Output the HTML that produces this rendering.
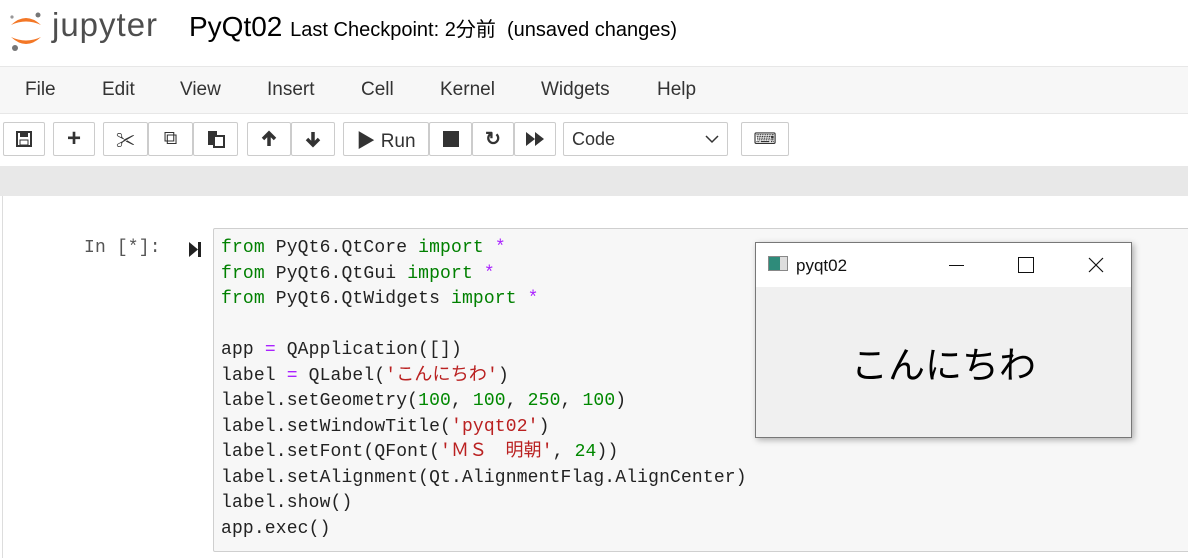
<!DOCTYPE html>
<html><head><meta charset="utf-8"><style>
body{margin:0;width:1188px;height:558px;overflow:hidden;background:#fff;font-family:"Liberation Sans","Noto Sans CJK JP",sans-serif;position:relative}
.abs{position:absolute}
.menu{left:0;top:66px;width:1188px;height:46px;background:#f7f7f7;border-top:1px solid #e7e7e7;border-bottom:1px solid #e7e7e7}
.menu span{position:absolute;top:12px;font-size:19px;color:#333}
.btn{position:absolute;top:122px;height:34px;border:1px solid #ccc;background:#fff;border-radius:2px;box-sizing:border-box;display:flex;align-items:center;justify-content:center;color:#333;font-size:19px}
.code{font-family:"Liberation Mono","Noto Sans CJK JP",monospace;font-size:18px;letter-spacing:0.15px;line-height:25.5px;white-space:pre;color:#222}
.k{color:#008000}.o{color:#aa22ff}.s{color:#ba2121}.n{color:#080}
</style></head><body>
<svg class="abs" style="left:6px;top:8px" width="40" height="44" viewBox="0 0 40 44">
<path d="M5 17 Q20 3 35 17 Q20 10 5 17Z" fill="#f37726"/>
<path d="M5 29 Q20 43 35 29 Q20 36 5 29Z" fill="#f37726"/>
<circle cx="32" cy="7" r="2.5" fill="#767677"/><circle cx="9" cy="40" r="3" fill="#767677"/><circle cx="6" cy="9" r="1.6" fill="#989798"/>
</svg>
<div class="abs" style="left:52px;top:6px;font-size:33px;color:#4e4e4e;letter-spacing:1px">jupyter</div>
<div class="abs" style="left:189px;top:11px;font-size:28px;color:#000">PyQt02 <span style="font-size:20px">Last Checkpoint: 2分前 &nbsp;(unsaved changes)</span></div>
<div class="abs menu">
<span style="left:25px">File</span><span style="left:102px">Edit</span><span style="left:180px">View</span><span style="left:267px">Insert</span><span style="left:361px">Cell</span><span style="left:440px">Kernel</span><span style="left:541px">Widgets</span><span style="left:657px">Help</span>
</div>
<div class="btn" style="left:3px;width:42px"><svg width="16" height="16"><rect x="1" y="1" width="14" height="14" fill="none" stroke="#333" stroke-width="2"/><rect x="4" y="1" width="8" height="5" fill="#333"/><rect x="4" y="9" width="8" height="5" fill="none" stroke="#333"/></svg></div>
<div class="btn" style="left:53px;width:42px;font-size:24px;font-weight:bold">+</div>
<div class="btn" style="left:103px;width:45px">✂</div>
<div class="btn" style="left:148px;width:45px">⧉</div>
<div class="btn" style="left:193px;width:45px"><svg width="18" height="18"><rect x="1" y="1" width="9" height="14" fill="#333"/><rect x="7" y="6" width="10" height="11" fill="#fff" stroke="#333" stroke-width="2"/></svg></div>
<div class="btn" style="left:247px;width:44px"><svg width="18" height="18"><path d="M9 16V3M3 9L9 3L15 9" stroke="#333" stroke-width="3.5" fill="none"/></svg></div>
<div class="btn" style="left:291px;width:44px"><svg width="18" height="18"><path d="M9 2V15M3 9L9 15L15 9" stroke="#333" stroke-width="3.5" fill="none"/></svg></div>
<div class="btn" style="left:343px;width:86px">▶&nbsp;Run</div>
<div class="btn" style="left:429px;width:43px"><div style="width:16px;height:16px;background:#333"></div></div>
<div class="btn" style="left:472px;width:42px;font-weight:bold">↻</div>
<div class="btn" style="left:514px;width:42px"><svg width="20" height="16"><path d="M1 1L10 8L1 15ZM10 1L19 8L10 15Z" fill="#333"/></svg></div>
<div class="btn" style="left:563px;width:165px;justify-content:flex-start;padding-left:8px;font-size:18px">Code<svg style="position:absolute;right:8px" width="14" height="10"><path d="M1 2L7 8L13 2" stroke="#333" stroke-width="1.5" fill="none"/></svg></div>
<div class="btn" style="left:741px;width:48px;font-size:16px">⌨</div>
<div class="abs" style="left:0;top:166px;width:1188px;height:30px;background:#e8e8e8"></div>
<div class="abs" style="left:2px;top:196px;width:1186px;height:362px;background:#fff;border-left:1px solid #ddd"></div>
<div class="abs code" style="left:84px;top:236px;color:#555">In [*]:</div>
<svg class="abs" style="left:188px;top:241px" width="14" height="17"><path d="M1 1 L10 8.5 L1 16Z" fill="#222"/><rect x="10" y="1" width="3" height="15" fill="#222"/></svg>
<div class="abs" style="left:213px;top:228px;width:980px;height:322px;background:#f7f7f7;border:1px solid #cfcfcf;border-radius:2px"></div>
<div class="abs code" style="left:221px;top:236px"><span class="k">from</span> PyQt6.QtCore <span class="k">import</span> <span class="o">*</span>
<span class="k">from</span> PyQt6.QtGui <span class="k">import</span> <span class="o">*</span>
<span class="k">from</span> PyQt6.QtWidgets <span class="k">import</span> <span class="o">*</span>

app <span class="o">=</span> QApplication([])
label <span class="o">=</span> QLabel(<span class="s">'こんにちわ'</span>)
label.setGeometry(<span class="n">100</span>, <span class="n">100</span>, <span class="n">250</span>, <span class="n">100</span>)
label.setWindowTitle(<span class="s">'pyqt02'</span>)
label.setFont(QFont(<span class="s">'ＭＳ　明朝'</span>, <span class="n">24</span>))
label.setAlignment(Qt.AlignmentFlag.AlignCenter)
label.show()
app.exec()</div>
<div class="abs" style="left:755px;top:242px;width:375px;height:194px;background:#f0f0f0;border:1px solid #777;box-shadow:2px 2px 6px rgba(0,0,0,.3)">
<div style="height:44px;background:#fff;position:relative">
<div style="position:absolute;left:12px;top:13px;width:20px;height:15px;border:1px solid #888;background:linear-gradient(90deg,#2e8b7a 60%,#ddd 60%);box-sizing:border-box"></div>
<div style="position:absolute;left:40px;top:13px;font-size:17px;color:#111">pyqt02</div>
<div style="position:absolute;left:193px;top:22px;width:15px;height:1px;background:#111"></div>
<div style="position:absolute;left:262px;top:14px;width:14px;height:14px;border:1px solid #111"></div>
<svg style="position:absolute;left:332px;top:14px" width="16" height="16"><path d="M1 1L15 15M15 1L1 15" stroke="#111" stroke-width="1.2"/></svg>
</div>
<div style="position:absolute;left:0;right:0;top:97px;text-align:center;font-size:37px;color:#000;font-family:'Noto Sans CJK JP',sans-serif;line-height:44px">こんにちわ</div>
</div>
</body></html>
